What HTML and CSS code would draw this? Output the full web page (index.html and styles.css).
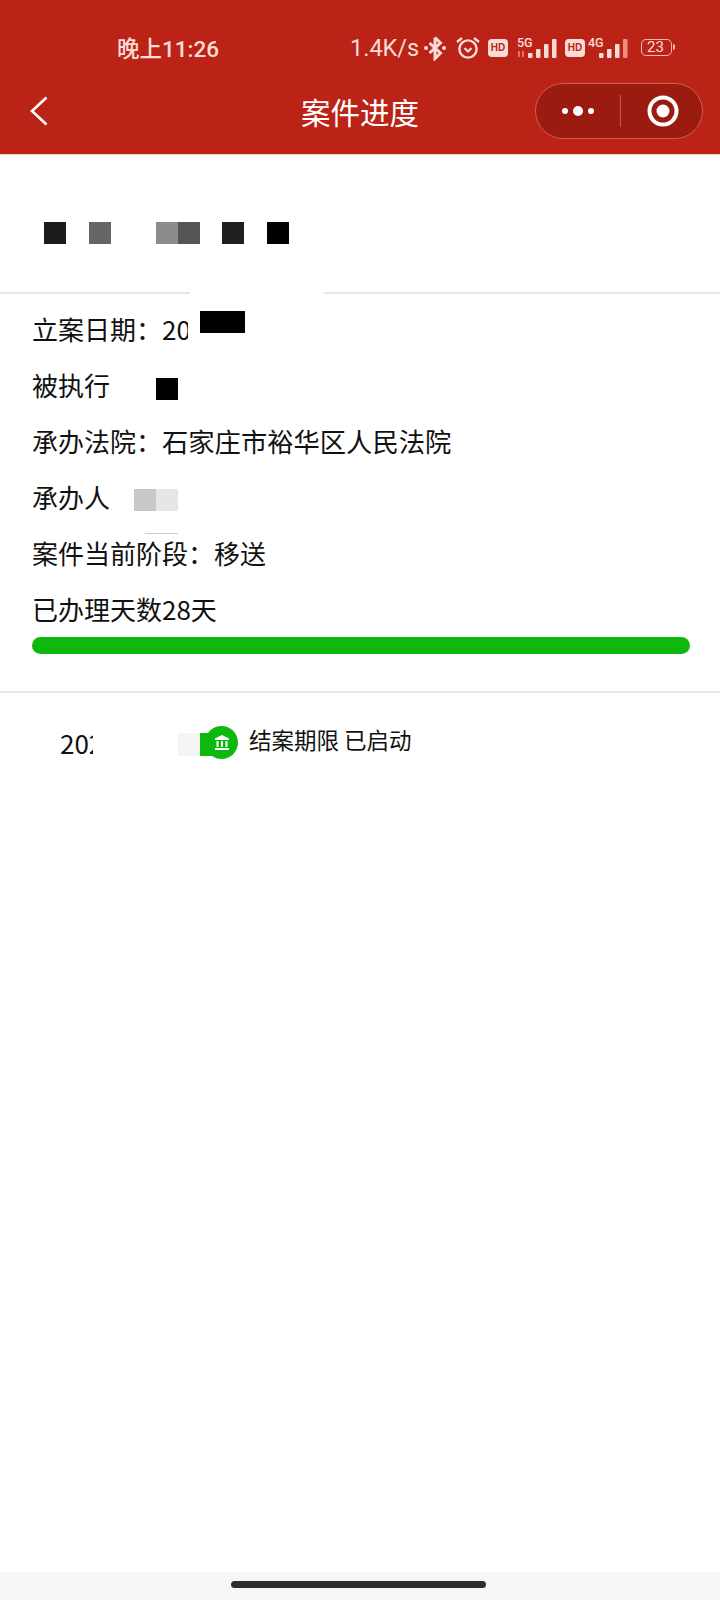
FILE: index.html
```html
<!DOCTYPE html>
<html lang="zh">
<head>
<meta charset="utf-8">
<title>案件进度</title>
<link rel="stylesheet" href="styles.css">
</head>
<body>
<div class="page">
  <header class="header">
    <div class="status">
      <span class="time">晚上11:26</span>
      <div class="status-right">
        <span class="speed">1.4K/s</span>
        <svg class="ic-bt" width="22" height="26" viewBox="0 0 22 26"><path d="M11 2.5v21l5.5-5.5-11-10M11 2.5l5.5 5.5-11 10" fill="none" stroke="#fadcd7" stroke-width="3"/><circle cx="2" cy="13" r="2" fill="#fadcd7"/><circle cx="20" cy="13" r="2" fill="#fadcd7"/></svg>
        <svg class="ic-alarm" width="26" height="24" viewBox="0 0 26 24"><circle cx="13" cy="13" r="8.6" fill="none" stroke="#fadcd7" stroke-width="2.4"/><path d="M2 6l5-4M24 6l-5-4" stroke="#fadcd7" stroke-width="2.4" fill="none"/><path d="M9.5 12l3.5 3.5 3.5-3.5" stroke="#fadcd7" stroke-width="2.2" fill="none"/></svg>
        <span class="hd">HD</span>
        <svg class="ic-sig" width="43" height="24" viewBox="0 0 43 24"><text x="2" y="11" class="net">5G</text><path d="M4 15v6M8 21v-6" stroke="#e98f85" stroke-width="1.5"/><rect x="13" y="17" width="4.5" height="5" rx="1" fill="#fadcd7"/><rect x="21" y="13" width="4.5" height="9" rx="1" fill="#fadcd7"/><rect x="29" y="8" width="4.5" height="14" rx="1" fill="#fadcd7"/><rect x="37" y="3" width="4.5" height="19" rx="1" fill="#fadcd7"/></svg>
        <span class="hd">HD</span>
        <svg class="ic-sig4" width="41" height="24" viewBox="0 0 41 24"><text x="0" y="11" class="net">4G</text><rect x="11" y="17" width="4.5" height="5" rx="1" fill="#fadcd7"/><rect x="19" y="13" width="4.5" height="9" rx="1" fill="#fadcd7"/><rect x="27" y="8" width="4.5" height="14" rx="1" fill="#fadcd7"/><rect x="35" y="3" width="4.5" height="19" rx="1" fill="#e98f85"/></svg>
        <span class="battery"><span class="battery-level">23</span></span>
      </div>
    </div>
    <nav class="nav">
      <svg class="back" width="18" height="30" viewBox="0 0 18 30"><path d="M16.5 1.5L2 15l14.500 13.500" fill="none" stroke="#fff" stroke-width="2.600"/></svg>
      <h1 class="nav-title">案件进度</h1>
      <div class="capsule">
        <svg class="dots" width="34" height="12" viewBox="0 0 34 12"><circle cx="4" cy="6" r="3" fill="#fff"/><circle cx="17" cy="6" r="5" fill="#fff"/><circle cx="30" cy="6" r="3" fill="#fff"/></svg>
        <span class="capsule-sep"></span>
        <svg class="target" width="32" height="32" viewBox="0 0 32 32"><circle cx="16" cy="16" r="13.5" fill="none" stroke="#fff" stroke-width="4"/><circle cx="16" cy="16" r="6.5" fill="#fff"/></svg>
      </div>
    </nav>
  </header>

  <section class="case-head">
    <span class="blot b1"></span>
    <span class="blot b2 gap-23"></span>
    <span class="blot b3 gap-45"></span>
    <span class="blot b4"></span>
    <span class="blot b5 gap-22"></span>
    <span class="blot b6 gap-23"></span>
  </section>

  <div class="divider">
    <span class="divider-a"></span>
    <span class="divider-b"></span>
  </div>

  <section class="info">
    <div class="row">立案日期&#xFF1A;<span class="clip-date">20</span><span class="blot-wide"></span></div>
    <div class="row">被执行<span class="blot b6 after-name"></span></div>
    <div class="row">承办法院&#xFF1A;<span class="court">石家庄市裕华区人民法院</span></div>
    <div class="row"><span class="clip-person">承办人员</span><span class="blot b7 after-person"></span><span class="blot b8"></span></div>
    <div class="thin-line"></div>
    <div class="row row-stage">案件当前阶段&#xFF1A;移送</div>
    <div class="row">已办理天数28天</div>
    <div class="progress"></div>
  </section>

  <div class="rule"></div>

  <section class="timeline">
    <span class="tl-date">202</span>
    <span class="tl-blot"></span>
    <span class="tl-green"></span>
    <span class="tl-icon">
      <svg width="14" height="15" viewBox="0 0 14 15"><path d="M7 0l7 3.600V5H0V3.600z" fill="#fff"/><path d="M1.500 6h2v6h-2zM6 6h2v6H6zM10.500 6h2v6h-2z" fill="#fff"/><path d="M0 13h14v2H0z" fill="#fff"/></svg>
    </span>
    <span class="tl-text">结案期限 已启动</span>
  </section>

  <footer class="home-bar"><span class="home-pill"></span></footer>
</div>
</body>
</html>
```

FILE: styles.css
```css
* { box-sizing: border-box; }
html, body { margin: 0; padding: 0; background: #fff; }
body { font-family: "Noto Sans CJK SC", "Liberation Sans", sans-serif; color: #111; }
.page { width: 720px; height: 1600px; display: flex; flex-direction: column; overflow: hidden; }

.header { height: 155px; background: #bb2317; border-bottom: 1px solid #e4cfcc; flex: none; }
.status { height: 83px; padding: 12px 0 0 117px; display: flex; align-items: center; color: #fadcd7; }
.time { font-family: Roboto, "Noto Sans CJK SC", sans-serif; font-size: 22.5px; font-weight: 500; width: 233px; margin-top: -2px; }
.status-right { display: flex; align-items: center; }
.speed { font-family: Roboto, sans-serif; font-size: 23.5px; width: 74px; }
.ic-bt { margin-right: 9px; }
.ic-alarm { margin-right: 7px; }
.hd { width: 20px; height: 18px; border-radius: 4px; background: #fadcd7; color: #bb2317; font: 700 10px/18px "Liberation Sans", sans-serif; text-align: center; }
.ic-sig { margin-left: 7px; margin-right: 7px; }
.ic-sig4 { margin-left: 3px; margin-right: 12px; }
.net { font: 500 12.5px Roboto, sans-serif; fill: #fadcd7; }
.battery { width: 31px; height: 17px; border: 1.5px solid #f2bcb5; border-radius: 5px; position: relative; display: flex; align-items: center; padding-left: 5px; }
.battery::after { content: ""; position: absolute; right: -4px; top: 4px; width: 2px; height: 6px; background: #f2bcb5; border-radius: 0 2px 2px 0; }
.battery-level { font: 400 15px/15px Roboto, sans-serif; color: #fadcd7; }

.nav { height: 56px; padding: 0 17px; display: grid; grid-template-columns: 1fr auto 1fr; align-items: center; color: #fff; }
.back { margin-left: 13px; }
.nav-title { margin: 0; font-size: 29.5px; font-weight: 400; text-align: center; line-height: 56px; }
.capsule { justify-self: end; width: 168px; height: 56px; border-radius: 28px; background: #9b1b10; border: 1px solid #cf5f53; display: flex; align-items: center; padding-left: 25px; }
.capsule-sep { width: 1px; height: 32px; background: #c9594d; margin-left: 25px; }
.target { margin-left: 26px; }

.case-head { height: 137px; padding: 67px 0 0 44px; display: flex; align-items: flex-start; flex: none; }
.blot { width: 22px; height: 22px; flex: none; display: block; }
.b1 { background: #1c1c1c; }
.b2 { background: #666; }
.b3 { background: #8c8c8c; }
.b4 { background: #555; }
.b5 { background: #1f1f1f; }
.b6 { background: #000; }
.b7 { background: #c8c8c8; }
.b8 { background: #e6e6e6; }
.gap-22 { margin-left: 22px; }
.gap-23 { margin-left: 23px; }
.gap-45 { margin-left: 45px; }

.divider { height: 2px; display: flex; flex: none; }
.divider-a { width: 190px; background: #e6e6e6; }
.divider-b { margin-left: 134px; flex: 1; background: #e6e6e6; }

.info { padding: 17px 30px 0 32px; flex: none; }
.row { height: 36px; margin-bottom: 20px; display: flex; align-items: center; font-size: 26px; line-height: 36px; white-space: nowrap; }
.court { font-size: 26.3px; }
.clip-date { width: 26px; overflow: hidden; }
.blot-wide { width: 45px; height: 22px; background: #000; margin: -14px 0 0 12px; }
.after-name { margin: 8px 0 0 46px; }
.clip-person { width: 80px; overflow: hidden; }
.after-person { margin: 6px 0 0 22px; }
.row .b8 { margin-top: 6px; }
.thin-line { width: 33px; height: 1px; background: #ccc; margin: -2px 0 0 113px; }
.row-stage { margin-top: 1px; }
.progress { height: 17px; width: 658px; margin-top: -10px; border-radius: 9px; background: #0fb80f; }

.rule { height: 2px; background: #e6e6e6; margin-top: 37px; flex: none; }

.timeline { height: 90px; padding: 30px 0 0 60px; display: flex; align-items: flex-start; flex: none; }
.tl-date { width: 33px; margin-top: 2px; overflow: hidden; font-size: 26px; line-height: 36px; }
.tl-blot { width: 22px; height: 23px; margin: 10px 0 0 85px; background: #f5f5f5; }
.tl-green { width: 14px; height: 23px; margin-top: 10px; background: #0fb80f; }
.tl-icon { width: 33px; height: 33px; margin: 3px 0 0 -9px; border-radius: 50%; background: #0fb80f; display: flex; align-items: center; justify-content: center; }
.tl-text { font-size: 22.5px; line-height: 32px; margin: 0 0 0 11px; }

.home-bar { margin-top: auto; height: 28px; background: #f6f6f6; display: flex; justify-content: center; flex: none; }
.home-pill { width: 255px; height: 7px; margin: 9px 3px 0 0; border-radius: 4px; background: #2d2d2d; }
```
